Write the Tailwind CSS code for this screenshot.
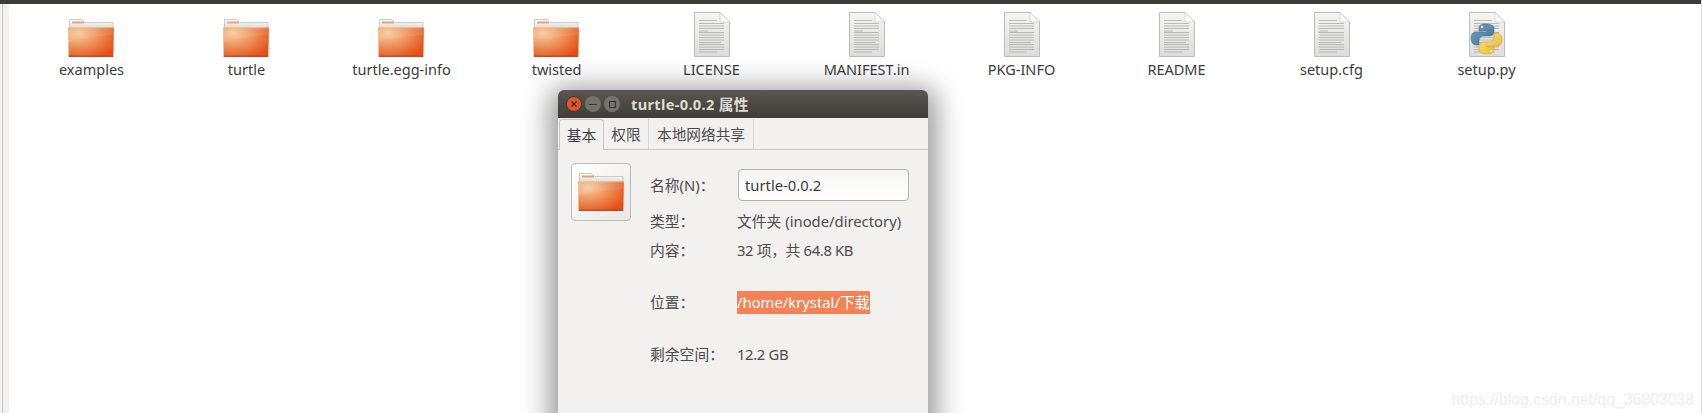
<!DOCTYPE html>
<html lang="zh">
<head>
<meta charset="utf-8">
<script src="https://cdn.jsdelivr.net/npm/@tailwindcss/browser@4"></script>
<title>turtle-0.0.2</title>
</head>
<body class="w-[1703px] h-[413px] overflow-hidden bg-white font-['Noto_Sans','Noto_Sans_CJK_SC',sans-serif] text-[14.5px] text-[#3c3c3c]">
<svg class="absolute w-0 h-0">
  <defs>
    <radialGradient id="fg" cx="0.22" cy="0.2" r="0.95">
      <stop offset="0" stop-color="#f7cb9c"/><stop offset="0.3" stop-color="#f1a773"/><stop offset="0.65" stop-color="#ea7a42"/><stop offset="1" stop-color="#e54d14"/>
    </radialGradient>
    <linearGradient id="pg" x1="0" y1="0" x2="0" y2="1"><stop offset="0" stop-color="#fff"/><stop offset="1" stop-color="#d8d8d6"/></linearGradient>
    <linearGradient id="dg" x1="0" y1="0" x2="0" y2="1"><stop offset="0" stop-color="#f5f5f4"/><stop offset="1" stop-color="#dcdcda"/></linearGradient>
    <linearGradient id="py1" x1="0" y1="0" x2="1" y2="1"><stop offset="0" stop-color="#7ba3c0"/><stop offset="1" stop-color="#3f6f92"/></linearGradient>
    <linearGradient id="py2" x1="0" y1="0" x2="1" y2="1"><stop offset="0" stop-color="#fde27a"/><stop offset="1" stop-color="#f0b52c"/></linearGradient>
    <symbol id="folder" viewBox="0 0 46 38">
      <path d="M1.500 .5H14l3 3H45V10H1.500z" fill="url(#pg)" stroke="#b9b9b7" stroke-width=".7"/>
      <rect x="4" y="2.500" width="12" height="2" fill="#ef9f72"/>
      <path d="M0 8.500H46L45.300 37.500H.7z" fill="url(#fg)"/>
      <path d="M0 8.500H46V16C30 17 14 19 .1 23z" fill="#fff" opacity=".08"/>
      <path d="M.7 37.300H45.300" stroke="#a8391a" stroke-width="1"/>
      <path d="M0 8.800H46" stroke="#f6bb92" stroke-width=".7"/>
    </symbol>
    <symbol id="doc" viewBox="0 0 36 45">
      <path d="M.5 .5H26L35.500 10V44.500H.5z" fill="url(#dg)" stroke="#bdbdbb"/>
      <path d="M26 .5V10H35.500z" fill="#fbfbfb" stroke="#c8c8c6" stroke-width=".6"/>
      <g stroke="#b4b4b2" stroke-width=".9">
        <path d="M5 8.500H23M5 11.500H30M5 14H30M5 16.500H30M5 19H14"/>
        <path d="M5 20.500H30M5 23H30M5 25.500H30M5 28H30M5 30.500H27"/>
        <path d="M5 32.500H30M5 35H30M5 37.500H30M5 40H23"/>
      </g>
    </symbol>
  </defs>
</svg>

<div class="relative h-[413px] flex">
  <div class="flex-1 min-w-0 flex flex-col">
    <div class="h-[4px] bg-[#3c3b37] shrink-0"></div>
    <div class="flex flex-1 min-h-0">
      <div class="w-[9px] shrink-0 flex">
        <div class="w-[2px] bg-[#f6f5f4]"></div>
        <div class="w-[1px] bg-[#c4c2bf]"></div>
        <div class="flex-1 bg-[#f2f1f0]"></div>
      </div>
      <div class="flex flex-1 items-start pl-[5px] pt-[8px]">
        <div class="w-[155px] flex flex-col items-center"><svg class="w-[46px] h-[38px] mt-[7px] ml-[-1px]"><use href="#folder"/></svg><span class="mt-[2px] leading-[20px]">examples</span></div>
        <div class="w-[155px] flex flex-col items-center"><svg class="w-[46px] h-[38px] mt-[7px] ml-[-1px]"><use href="#folder"/></svg><span class="mt-[2px] leading-[20px]">turtle</span></div>
        <div class="w-[155px] flex flex-col items-center"><svg class="w-[46px] h-[38px] mt-[7px] ml-[-1px]"><use href="#folder"/></svg><span class="mt-[2px] leading-[20px]">turtle.egg-info</span></div>
        <div class="w-[155px] flex flex-col items-center"><svg class="w-[46px] h-[38px] mt-[7px] ml-[-1px]"><use href="#folder"/></svg><span class="mt-[2px] leading-[20px]">twisted</span></div>
        <div class="w-[155px] flex flex-col items-center"><svg class="w-[36px] h-[45px]"><use href="#doc"/></svg><span class="mt-[2px] leading-[20px]">LICENSE</span></div>
        <div class="w-[155px] flex flex-col items-center"><svg class="w-[36px] h-[45px]"><use href="#doc"/></svg><span class="mt-[2px] leading-[20px]">MANIFEST.in</span></div>
        <div class="w-[155px] flex flex-col items-center"><svg class="w-[36px] h-[45px]"><use href="#doc"/></svg><span class="mt-[2px] leading-[20px]">PKG-INFO</span></div>
        <div class="w-[155px] flex flex-col items-center"><svg class="w-[36px] h-[45px]"><use href="#doc"/></svg><span class="mt-[2px] leading-[20px]">README</span></div>
        <div class="w-[155px] flex flex-col items-center"><svg class="w-[36px] h-[45px]"><use href="#doc"/></svg><span class="mt-[2px] leading-[20px]">setup.cfg</span></div>
        <div class="w-[155px] flex flex-col items-center">
          <svg class="w-[36px] h-[45px]" viewBox="0 0 36 45">
            <use href="#doc"/>
            <path d="M17 12c-6 0-7 2-7 4v3h8v1H7c-3 0-5 2-5 6s2 7 5 7h3v-4c0-3 2-5 5-5h6c2 0 4-2 4-4v-4c0-2-3-4-8-4z" fill="url(#py1)" stroke="#3d6a8a" stroke-width=".5"/>
            <circle cx="13" cy="15" r="1" fill="#fff"/>
            <path d="M18 42c6 0 7-2 7-4v-3h-8v-1h11c3 0 5-2 5-6s-2-7-5-7h-3v4c0 3-2 5-5 5h-6c-2 0-4 2-4 4v4c0 2 3 4 8 4z" fill="url(#py2)" stroke="#c99a22" stroke-width=".5"/>
            <circle cx="22" cy="39" r="1" fill="#fff"/>
          </svg>
          <span class="mt-[2px] leading-[20px]">setup.py</span>
        </div>
      </div>
    </div>
  </div>
  <div class="w-[1px] shrink-0 bg-[#dcdcdc]"></div>
  <div class="w-[1px] shrink-0 bg-white"></div>

  <div class="absolute right-[9px] bottom-[2px] text-[15.8px] leading-[22px] text-[#eeeeee] font-['Liberation_Sans',sans-serif]">https://blog.csdn.net/qq_36803038</div>

  <!-- properties window -->
  <div class="absolute left-[558px] top-[90px] w-[370px] h-[340px] bg-[#f2f1f0] rounded-t-[6px] shadow-[0_6px_28px_8px_rgba(0,0,0,0.42)] flex flex-col text-[14.8px] text-[#4c4c4c]">
    <div class="h-[28px] shrink-0 rounded-t-[6px] bg-gradient-to-b from-[#5a5750] to-[#3e3d38] flex items-center pl-[8px]">
      <span class="w-[16px] h-[16px] rounded-full bg-[#e2562b] border border-[#3c3a35] flex items-center justify-center">
        <svg class="w-[8px] h-[8px]" viewBox="0 0 8 8"><path d="M1.500 1.500L6.500 6.500M6.500 1.500L1.500 6.500" stroke="#5a2010" stroke-width="1.200"/></svg>
      </span>
      <span class="ml-[3px] w-[16px] h-[16px] rounded-full bg-[#75726b] flex items-center justify-center">
        <span class="w-[8px] h-[1px] bg-[#33322e]"></span>
      </span>
      <span class="ml-[3px] w-[16px] h-[16px] rounded-full bg-[#75726b] flex items-center justify-center">
        <span class="w-[7px] h-[7px] border border-[#33322e]"></span>
      </span>
      <span class="ml-[11px] font-bold text-[14.67px] tracking-[0.3px] text-[#dfdbd2]">turtle-0.0.2 属性</span>
    </div>
    <div class="h-[32px] shrink-0 flex items-end border-b border-[#c9c7c4] pl-[1px] text-[14.67px]">
      <div class="w-[45px] h-[31px] mb-[-1px] bg-[#f2f1f0] border border-b-0 border-[#c9c7c4] rounded-t-[3px] flex items-center justify-center text-[#3c3c3c]">基本</div>
      <div class="w-[45px] h-[30px] border-r border-[#d8d6d3] flex items-center justify-center">权限</div>
      <div class="w-[105px] h-[30px] border-r border-[#d8d6d3] flex items-center justify-center">本地网络共享</div>
    </div>
    <div class="flex pl-[13px] pt-[13px]">
      <div class="w-[60px] h-[58px] shrink-0 rounded-[4px] border border-[#bdbbb8] bg-gradient-to-br from-[#ffffff] to-[#e9e8e6] flex items-center justify-center">
        <svg class="w-[46px] h-[38px]"><use href="#folder"/></svg>
      </div>
      <div class="ml-[19px] pt-[6px] flex flex-col">
        <div class="h-[32px] flex items-center">
          <span class="w-[88px]">名称(N)：</span>
          <div class="w-[171px] h-[32px] rounded-[4px] border border-[#b5b3b0] bg-gradient-to-b from-[#f6f6f5] to-[#ffffff] flex items-center pl-[6px] text-[#3c3c3c]">turtle-0.0.2</div>
        </div>
        <div class="h-[28px] mt-[6px] flex items-center"><span class="w-[87px]">类型：</span><span>文件夹 (inode/directory)</span></div>
        <div class="h-[28px] mt-[1px] flex items-center"><span class="w-[87px]">内容：</span><span class="tracking-[-0.35px]">32 项，共 64.8 KB</span></div>
        <div class="h-[28px] mt-[24px] flex items-center"><span class="w-[87px]">位置：</span><span class="w-[133px] h-[23px] leading-[23px] bg-[#f48255] text-white whitespace-nowrap">/home/krystal/下载</span></div>
        <div class="h-[28px] mt-[24px] flex items-center"><span class="w-[87px]">剩余空间：</span><span class="tracking-[-0.35px]">12.2 GB</span></div>
      </div>
    </div>
  </div>
</div>
</body>
</html>
